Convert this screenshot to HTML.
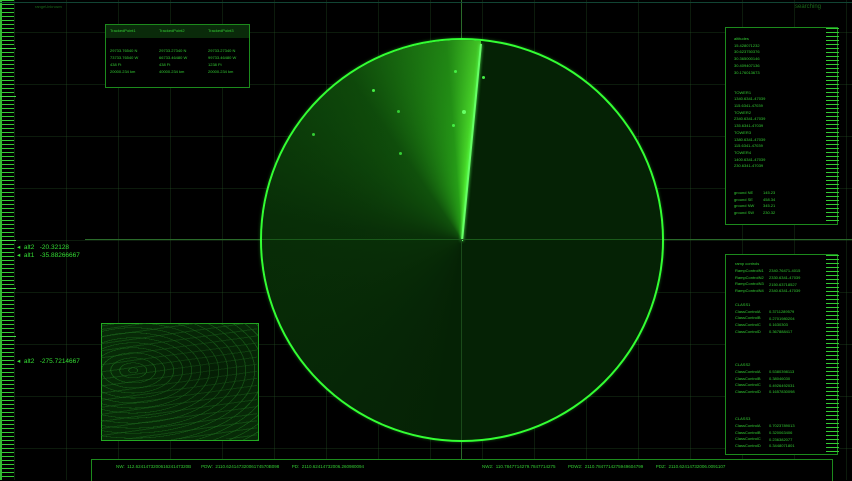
<!DOCTYPE html><html><head><style>
body{margin:0;width:852px;height:480px;background:#000;overflow:hidden;position:relative;font-family:"Liberation Sans",sans-serif;color:#3f3;}
.a{position:absolute}
.grid{left:0;top:0;width:852px;height:480px;background-image:linear-gradient(90deg,rgba(40,90,40,.3) 1px,transparent 1px),linear-gradient(rgba(40,90,40,.3) 1px,transparent 1px);background-size:52px 52px;background-position:14px 32px}
.box{border:1px solid #1c8a1c;background:#000}
.t{font-size:4px;line-height:7px;color:#3c3;white-space:pre}
.rul{background:repeating-linear-gradient(#3c3 0 1px,transparent 1px 4px)}
</style></head><body>
<div class="a grid"></div>
<div class="a" style="left:85px;top:239px;width:767px;height:1px;background:#2a6a2a"></div>
<div class="a" style="left:461px;top:0;width:1px;height:480px;background:#2a6a2a"></div>
<div class="a rul" style="left:0;top:0;width:14px;height:480px"></div>
<div class="a" style="left:0;top:0;width:2px;height:480px;background:#3b3"></div>
<div class="a" style="left:0;top:48px;width:16px;height:1px;background:#4d4"></div>
<div class="a" style="left:0;top:96px;width:16px;height:1px;background:#4d4"></div>
<div class="a" style="left:0;top:240px;width:16px;height:1px;background:#4d4"></div>
<div class="a" style="left:0;top:288px;width:16px;height:1px;background:#4d4"></div>
<div class="a" style="left:0;top:336px;width:16px;height:1px;background:#4d4"></div>
<div class="a t" style="left:35px;top:3px;color:#1a6a1a">rangeUnknown</div>
<div class="a" style="left:795px;top:4px;font-size:6px;color:#1a6a1a">searching</div>
<div class="a" style="left:0;top:2px;width:852px;height:1px;background:#143"></div>
<div class="a" style="left:262px;top:40px;width:400px;height:400px;border-radius:50%;background:#052205;overflow:hidden;box-shadow:0 0 0 2px #3f3,0 0 5px #3f3">
 <div class="a" style="left:0;top:0;width:400px;height:400px;background:conic-gradient(from 5.5deg,rgba(0,0,0,0) 0deg,rgba(0,0,0,0) 180deg,rgba(20,90,15,.25) 270deg,rgba(30,140,20,.45) 320deg,rgba(50,200,30,.75) 350deg,rgba(90,255,50,.95) 360deg)"></div>
 <div class="a" style="left:0;top:0;width:400px;height:400px;background:radial-gradient(circle at 50% 50%,rgba(5,34,5,.0) 0,rgba(5,34,5,.0) 20%,rgba(5,34,5,.35) 100%)"></div>
 <div class="a" style="left:199px;top:3px;width:2px;height:198px;background:#6f6;transform-origin:50% 100%;transform:rotate(5.5deg);box-shadow:0 0 3px #5f5"></div>
 <div class="a" style="left:0;top:199px;width:400px;height:1px;background:#1a5a1a"></div>
 <div class="a" style="left:199px;top:200px;width:1px;height:200px;background:#1a4a1a"></div>
 <div class="a" style="left:110px;top:49px;width:3px;height:3px;background:#4e4;border-radius:50%"></div>
 <div class="a" style="left:192px;top:30px;width:3px;height:3px;background:#4e4;border-radius:50%"></div>
 <div class="a" style="left:220px;top:36px;width:3px;height:3px;background:#4e4;border-radius:50%"></div>
 <div class="a" style="left:200px;top:70px;width:4px;height:4px;background:#6f6;border-radius:50%"></div>
 <div class="a" style="left:135px;top:70px;width:3px;height:3px;background:#3c3;border-radius:50%"></div>
 <div class="a" style="left:50px;top:93px;width:3px;height:3px;background:#3c3;border-radius:50%"></div>
 <div class="a" style="left:137px;top:112px;width:3px;height:3px;background:#3c3;border-radius:50%"></div>
 <div class="a" style="left:190px;top:84px;width:3px;height:3px;background:#4e4;border-radius:50%"></div>
</div>
<div class="a box" style="left:105px;top:24px;width:143px;height:62px">
 <div style="background:#0a2a0a;height:13px"></div>
 <div class="a t" style="left:4px;top:2px">TrackedPoint1</div>
 <div class="a t" style="left:53px;top:2px">TrackedPoint2</div>
 <div class="a t" style="left:102px;top:2px">TrackedPoint3</div>
 <div class="a t" style="left:4px;top:22px">29733.76540 N
73733.76540 W
438 Ft
20000.234 km</div>
 <div class="a t" style="left:53px;top:22px">29733.27340 N
66733.46480 W
438 Ft
40000.234 km</div>
 <div class="a t" style="left:102px;top:22px">29733.27340 N
99733.46480 W
1238 Ft
20000.234 km</div>
</div>
<div class="a box" style="left:725px;top:27px;width:111px;height:196px"></div>
<div class="a rul" style="left:826px;top:28px;width:13px;height:195px"></div>
<div class="a t" style="left:734px;top:36px;line-height:6.7px">altitudes
15.428071232
30.623750376
30.365000146
30.409407136
30.176013673


TOWER1
1340.6341-47039
115.6341-47039
TOWER2
2340.6341-47039
135.6341-47039
TOWER3
1380.6341-47039
115.6341-47039
TOWER4
1400.6341-47039
230.6341-47039</div>
<div class="a t" style="left:734px;top:190px;line-height:6.7px">ground NE
ground SE
ground NW
ground SW</div>
<div class="a t" style="left:763px;top:190px;line-height:6.7px">145.23
458.34
345.21
230.32</div>
<div class="a box" style="left:725px;top:254px;width:111px;height:199px"></div>
<div class="a rul" style="left:826px;top:255px;width:13px;height:198px"></div>
<div class="a t" style="left:735px;top:261px;line-height:6.8px">ramp controls
RampControlN1
RampControlN2
RampControlN3
RampControlN4

CLASS1
ClassControlA
ClassControlB
ClassControlC
ClassControlD</div>
<div class="a t" style="left:769px;top:268px;line-height:6.8px">2340.76471-4015
2330.6341-47039
2150.63718527
2340.6341-47039


0.3711289579
0.2701980204
0.1630303
0.367888417</div>
<div class="a t" style="left:735px;top:362px;line-height:6.8px">CLASS2
ClassControlA
ClassControlB
ClassControlC
ClassControlD</div>
<div class="a t" style="left:769px;top:369px;line-height:6.8px">0.5380398113
0.38046030
0.4926492031
0.1657830098</div>
<div class="a t" style="left:735px;top:416px;line-height:6.8px">CLASS3
ClassControlA
ClassControlB
ClassControlC
ClassControlD</div>
<div class="a t" style="left:769px;top:423px;line-height:6.8px">0.7023789013
0.320063406
0.236382077
0.3448071801</div>
<div class="a" style="left:17px;top:244px;font-size:6.5px;line-height:8px;color:#3d3;white-space:pre">◂  alt2   -20.32128
◂  alt1   -35.88266667</div>
<div class="a" style="left:17px;top:357px;font-size:6.5px;color:#3d3;white-space:pre">◂  alt2   -275.7214667</div>
<div class="a" style="left:101px;top:323px;width:156px;height:116px;border:1px solid #2a2;background:repeating-radial-gradient(ellipse at 20% 40%,#072a07 0 4px,#165a16 4px 5px,#072a07 5px 9px),#072a07"></div>
<div class="a" style="left:101px;top:323px;width:156px;height:116px;background:repeating-linear-gradient(172deg,transparent 0 6px,rgba(30,110,30,.45) 6px 7px)"></div>
<div class="a" style="left:101px;top:323px;width:156px;height:116px;background:radial-gradient(ellipse at 70% 40%,rgba(0,0,0,.3),transparent 60%)"></div>
<div class="a" style="left:91px;top:459px;width:740px;height:21px;border:1px solid #1c8a1c;border-bottom:none;background:#000"></div>
<div class="a" style="left:116px;top:464px;font-size:4.5px;color:#3c3;white-space:pre">NW:  112.624147320061624147320B        PDW:  2110.62414732006174570B098          PD:  2110.62414732006.260980094</div>
<div class="a" style="left:482px;top:464px;font-size:4.5px;color:#3c3;white-space:pre">NW2:  110.7847714279.7847714275          PDW2:  2110.7847714275949604799          PDZ:  2110.62414732006.0091107</div>
</body></html>
